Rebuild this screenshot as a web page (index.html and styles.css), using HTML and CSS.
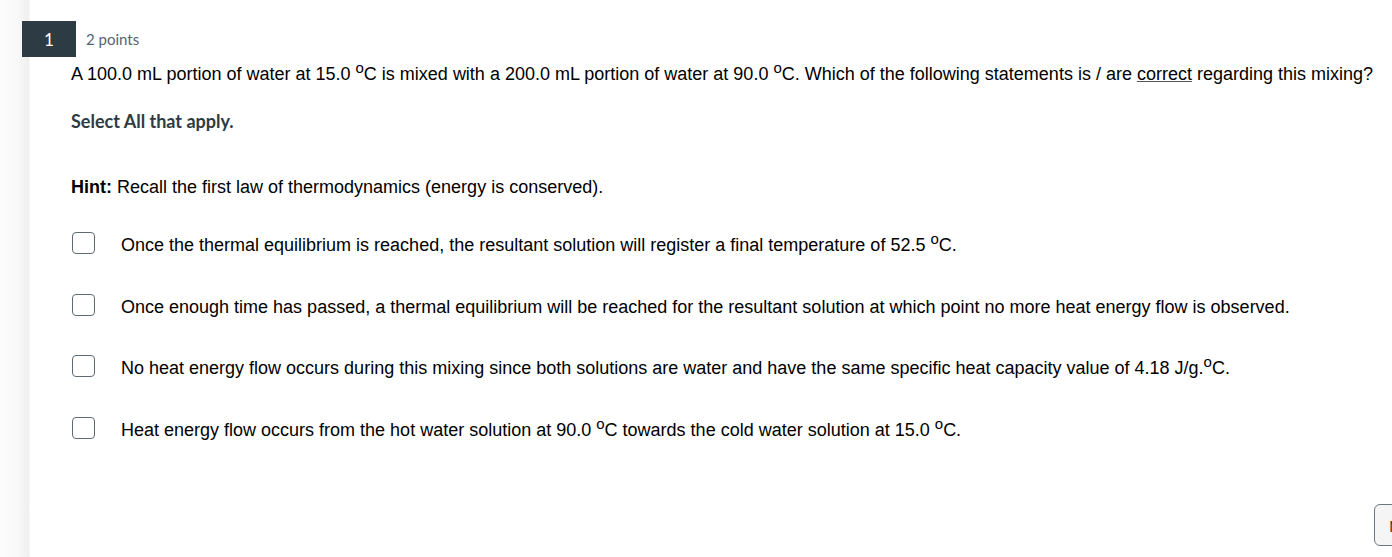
FILE: index.html
```html
<!DOCTYPE html>
<html>
<head>
    <title>Quiz question</title>
    <meta name="viewport" content="width=device-width, initial-scale=1">
    <link rel="stylesheet" href="styles.css">
</head>
<body>
    <div class="page">
        <div class="question">
            <div class="question-header">
                <span class="question-number">1</span>
                <span class="question-points">2 points</span>
            </div>

            <div class="question-body">
                <p class="question-text">A 100.0 mL portion of water at 15.0 <sup>o</sup>C is mixed with a 200.0 mL portion of water at 90.0 <sup>o</sup>C. Which of the following statements is / are <u>correct</u> regarding this mixing?</p>

                <p class="select-all">Select All that apply.</p>

                <p class="hint"><b>Hint:</b> Recall the first law of thermodynamics (energy is conserved).</p>

                <div class="answers">
                    <label class="answer">
                        <span class="box"></span>
                        <span>Once the thermal equilibrium is reached, the resultant solution will register a final temperature of 52.5 <sup>o</sup>C.</span>
                    </label>
                    <label class="answer">
                        <span class="box"></span>
                        <span>Once enough time has passed, a thermal equilibrium will be reached for the resultant solution at which point no more heat energy flow is observed.</span>
                    </label>
                    <label class="answer">
                        <span class="box"></span>
                        <span>No heat energy flow occurs during this mixing since both solutions are water and have the same specific heat capacity value of 4.18 J/g.<sup>o</sup>C.</span>
                    </label>
                    <label class="answer">
                        <span class="box"></span>
                        <span>Heat energy flow occurs from the hot water solution at 90.0 <sup>o</sup>C towards the cold water solution at 15.0 <sup>o</sup>C.</span>
                    </label>
                </div>
            </div>
        </div>

        <div class="footer">
            <button class="next-btn">Next</button>
        </div>
    </div>
</body>
</html>
```

FILE: styles.css
```css
html, body {
    margin: 0;
    height: 100%;
    overflow: hidden;
}

body {
    font-family: "Liberation Sans", Arial, sans-serif;
    color: #000;
    background: linear-gradient(to right, #fcfcfc 0, #f9f9f9 16px, #efefef 29px, #fff 30px);
}

.page {
    padding: 21px 0 0 22px;
}

.question-header {
    display: flex;
    align-items: center;
}

.question-number {
    width: 54px;
    height: 36px;
    background-color: #2d3b45;
    color: #fff;
    font-family: Lato, sans-serif;
    font-size: 17px;
    display: flex;
    align-items: center;
    justify-content: center;
}

.question-points {
    margin-left: 10px;
    font-family: Lato, sans-serif;
    font-size: 15px;
    color: #56626c;
}

.question-body {
    margin-left: 49px;
}

.question-body p {
    margin: 0;
    font-size: 18px;
    line-height: 24px;
}

.question-text {
    padding-top: 5px;
}

sup {
    font-size: 15px;
    line-height: 0;
    vertical-align: 7px;
}

u {
    text-decoration-color: #555;
}

.question-body .select-all {
    margin-top: 23px;
    font-family: Lato, sans-serif;
    font-weight: bold;
    color: #2d3b45;
}

.question-body .hint {
    margin-top: 42px;
}

.answers {
    display: flex;
    flex-direction: column;
    gap: 37.7px;
    margin-top: 34px;
}

.answer {
    display: flex;
    align-items: center;
    font-size: 18px;
    line-height: 24px;
}

.box {
    width: 21px;
    height: 20px;
    border: 1px solid #5f6b74;
    border-radius: 4px;
    margin: -4px 26px 0 1px;
    flex-shrink: 0;
}

.footer {
    display: flex;
    justify-content: flex-end;
    width: calc(100% + 46px);
    margin-top: 62px;
}

.next-btn {
    height: 42px;
    padding: 0 14px;
    background: #f5f5f5;
    border: 1px solid #6b7780;
    border-radius: 6px;
    font-family: Lato, sans-serif;
    font-size: 16px;
    color: #2d3b45;
}
```
